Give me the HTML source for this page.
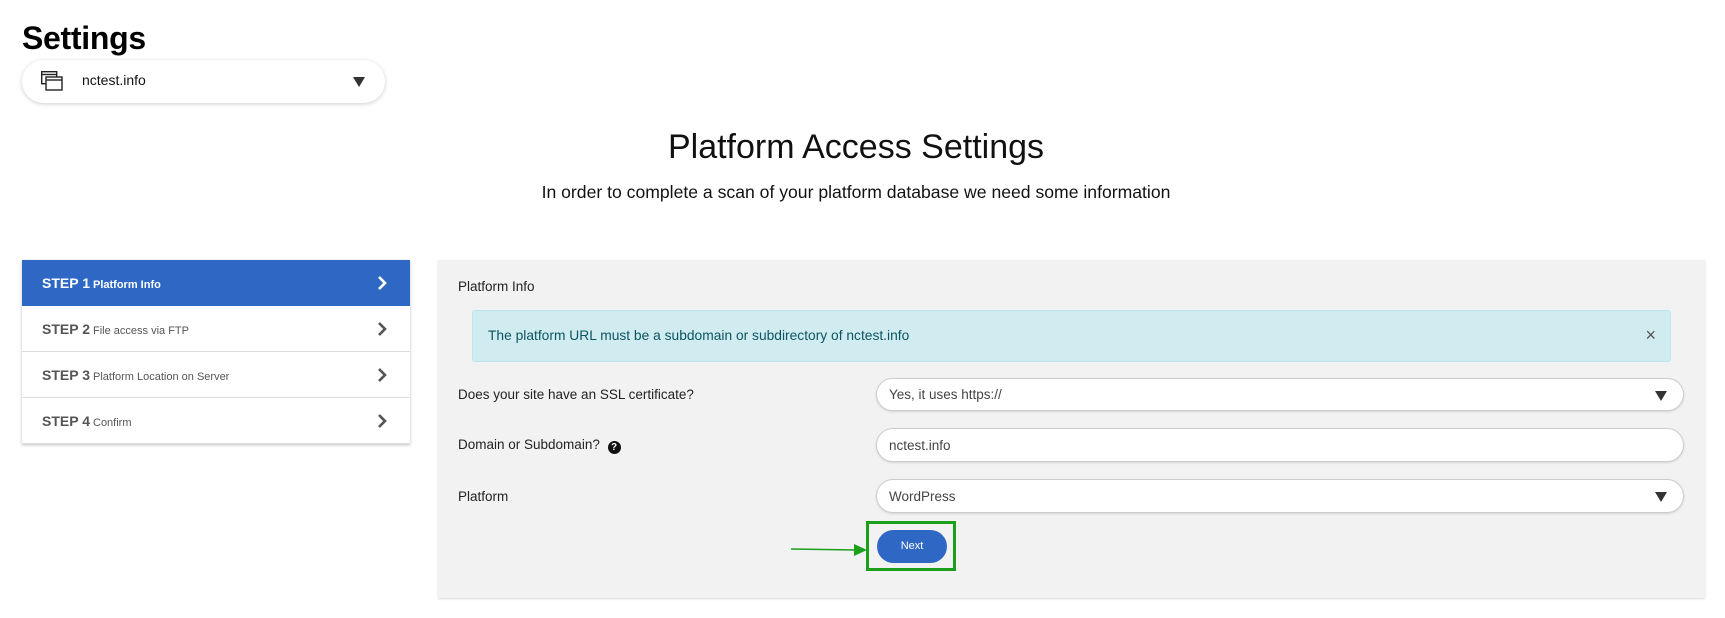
<!DOCTYPE html>
<html><head><meta charset="utf-8"><style>
*{box-sizing:border-box;margin:0;padding:0}
body{width:1725px;height:618px;background:#fff;font-family:"Liberation Sans",sans-serif;color:#222;position:relative;overflow:hidden}
.a{position:absolute}
h1{position:absolute;left:22px;top:20px;font-size:32px;font-weight:bold;color:#000;letter-spacing:-0.3px}
.dd{left:22px;top:60px;width:363px;height:43px;border-radius:22px;background:#fff;box-shadow:0 1px 4px rgba(0,0,0,.2)}
.tri{width:0;height:0;border-left:6px solid transparent;border-right:6px solid transparent;border-top:10px solid #333}
.steps{left:22px;top:260px;width:388px;box-shadow:0 1px 3px rgba(0,0,0,.25);background:#fff}
.step{height:46px;border-bottom:1px solid #ddd;padding-left:20px;font-size:14px;line-height:46px;color:#555;position:relative;font-weight:bold}
.step small{font-size:11px;font-weight:normal;margin-left:3px}
.step.on{background:#2e68c4;color:#fff;border-bottom:none}
.step .ch{position:absolute;right:20px;top:15px;width:16px;height:16px}
.panel{left:438px;top:260px;width:1267px;height:338px;background:#f2f2f2;box-shadow:0 1px 2px rgba(0,0,0,.15)}
.lbl{font-size:13.5px;color:#222}
.fld{left:876px;width:808px;background:#fff;border:1px solid #ccc;border-radius:18px;box-shadow:0 1px 2px rgba(0,0,0,.12);font-size:13.5px;color:#444;padding-left:12px;display:flex;align-items:center}
</style></head><body>
<h1>Settings</h1>
<div class="a dd">
<svg class="a" style="left:19px;top:11px" width="22" height="20" viewBox="0 0 22 20" fill="none" stroke="#222" stroke-width="1.4"><rect x="0.7" y="0.7" width="15" height="12"/><line x1="0.7" y1="3.5" x2="15.7" y2="3.5"/><rect x="5" y="6" width="16" height="13" fill="#fff"/><line x1="5" y1="9" x2="21" y2="9"/></svg>
<div class="a" style="left:60px;top:12px;font-size:14px;color:#111">nctest.info</div>
<div class="a tri" style="left:331px;top:17px"></div>
</div>
<div class="a" style="left:0;width:1712px;text-align:center;top:128px;font-size:34px;color:#111">Platform Access Settings</div>
<div class="a" style="left:0;width:1712px;text-align:center;top:182px;font-size:17.6px;color:#111">In order to complete a scan of your platform database we need some information</div>
<div class="a steps">
<div class="step on">STEP 1<small style="font-weight:bold">Platform Info</small><svg class="ch" viewBox="0 0 16 16"><path d="M5 2l6 6-6 6" stroke="#fff" stroke-width="2.6" fill="none"/></svg></div>
<div class="step">STEP 2<small>File access via FTP</small><svg class="ch" viewBox="0 0 16 16"><path d="M5 2l6 6-6 6" stroke="#555" stroke-width="2.6" fill="none"/></svg></div>
<div class="step">STEP 3<small>Platform Location on Server</small><svg class="ch" viewBox="0 0 16 16"><path d="M5 2l6 6-6 6" stroke="#555" stroke-width="2.6" fill="none"/></svg></div>
<div class="step">STEP 4<small>Confirm</small><svg class="ch" viewBox="0 0 16 16"><path d="M5 2l6 6-6 6" stroke="#555" stroke-width="2.6" fill="none"/></svg></div>
</div>
<div class="a panel"></div>
<div class="a lbl" style="left:458px;top:279px">Platform Info</div>
<div class="a" style="left:472px;top:310px;width:1199px;height:52px;background:#d1ecf1;border:1px solid #bee5eb;border-radius:3px;color:#0c5460;font-size:13.8px;padding:17px 0 0 15px">The platform URL must be a subdomain or subdirectory of nctest.info<span class="a" style="right:14px;top:14px;font-size:18px;color:#555">×</span></div>
<div class="a lbl" style="left:458px;top:387px">Does your site have an SSL certificate?</div>
<div class="a fld" style="top:378px;height:33px">Yes, it uses https://<div class="a tri" style="right:16px;top:12px"></div></div>
<div class="a lbl" style="left:458px;top:437px">Domain or Subdomain? <span style="display:inline-block;width:13px;height:13px;border-radius:50%;background:#111;color:#fff;font-size:10px;text-align:center;line-height:13px;font-weight:bold;margin-left:4px;vertical-align:-1px">?</span></div>
<div class="a fld" style="top:428px;height:34px">nctest.info</div>
<div class="a lbl" style="left:458px;top:489px">Platform</div>
<div class="a fld" style="top:479px;height:34px">WordPress<div class="a tri" style="right:16px;top:12px"></div></div>
<div class="a" style="left:866px;top:521px;width:90px;height:50px;border:3px solid #1aa01a"></div>
<div class="a" style="left:877px;top:530px;width:70px;height:33px;border-radius:17px;background:#2e68c4;color:#fff;font-size:11px;text-align:center;line-height:33px">Next</div>
<svg class="a" style="left:790px;top:540px" width="80" height="20"><line x1="1" y1="9" x2="66" y2="10" stroke="#1aa01a" stroke-width="1.6"/><path d="M64 4l13 6-13 6z" fill="#1aa01a"/></svg>
</body></html>
